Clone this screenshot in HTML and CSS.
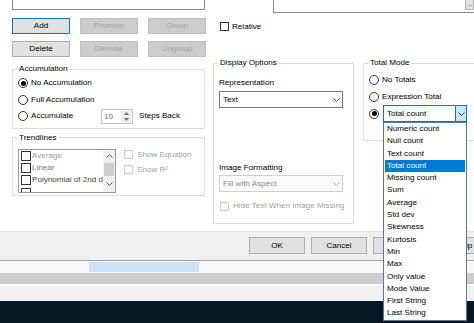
FILE: index.html
```html
<!DOCTYPE html>
<html lang="en">
<head>
    <meta charset="UTF-8">
    <meta name="viewport" content="width=device-width, initial-scale=1.0">
    <title>Expression Properties</title>
    <link rel="stylesheet" href="styles.css">
</head>
<body>
    <div class="page">
        <div class="left">
            <div class="textbox tb-left"></div>
            <div class="btnrow">
                <button class="btn focus">Add</button>
                <button class="btn" disabled>Promote</button>
                <button class="btn" disabled>Group</button>
            </div>
            <div class="btnrow">
                <button class="btn">Delete</button>
                <button class="btn" disabled>Demote</button>
                <button class="btn" disabled>Ungroup</button>
            </div>
            <fieldset class="group accum">
                <legend>Accumulation</legend>
                <div class="opts">
                    <div class="opt"><span class="radio on"></span>No Accumulation</div>
                    <div class="opt"><span class="radio"></span>Full Accumulation</div>
                    <div class="opt">
                        <span class="radio"></span><span class="opt-label">Accumulate</span>
                        <div class="spin">
                            <span class="spin-val">10</span>
                            <span class="spin-btns">
                                <span><svg width="5" height="3" viewBox="0 0 5 3"><path d="M0 3 L2.5 0 L5 3z" fill="#707070"/></svg></span>
                                <span><svg width="5" height="3" viewBox="0 0 5 3"><path d="M0 0 L2.5 3 L5 0z" fill="#707070"/></svg></span>
                            </span>
                        </div>
                        <span>Steps Back</span>
                    </div>
                </div>
            </fieldset>
            <fieldset class="group trend">
                <legend>Trendlines</legend>
                <div class="trend-body">
                    <div class="listbox">
                        <div class="list-items">
                            <div class="li light"><span class="check"></span>Average</div>
                            <div class="li mid"><span class="check"></span>Linear</div>
                            <div class="li"><span class="check"></span>Polynomial of 2nd d</div>
                            <div class="li"><span class="check"></span></div>
                        </div>
                        <div class="vscroll">
                            <span class="sb-arrow"><svg width="7" height="4" viewBox="0 0 7 4"><path d="M0.5 3.5 L3.5 0.5 L6.5 3.5" fill="none" stroke="#555"/></svg></span>
                            <span class="sb-thumb"></span>
                            <span class="sb-arrow"><svg width="7" height="4" viewBox="0 0 7 4"><path d="M0.5 0.5 L3.5 3.5 L6.5 0.5" fill="none" stroke="#555"/></svg></span>
                        </div>
                    </div>
                    <div class="trend-checks">
                        <div class="chk off"><span class="check"></span>Show Equation</div>
                        <div class="chk off"><span class="check"></span>Show R²</div>
                    </div>
                </div>
            </fieldset>
        </div>

        <div class="right">
            <div class="textbox tb-right"><span class="dots">...</span></div>
            <div class="chk relative"><span class="check"></span>Relative</div>
            <div class="groups">
                <fieldset class="group display">
                    <legend>Display Options</legend>
                    <div class="lbl first">Representation</div>
                    <div class="combo">
                        <span class="val">Text</span>
                        <span class="arrow"><svg width="7" height="4" viewBox="0 0 7 4"><path d="M0.5 0.5 L3.5 3.5 L6.5 0.5" fill="none" stroke="#444"/></svg></span>
                    </div>
                    <div class="lbl second">Image Formatting</div>
                    <div class="combo off">
                        <span class="val">Fill with Aspect</span>
                        <span class="arrow"><svg width="7" height="4" viewBox="0 0 7 4"><path d="M0.5 0.5 L3.5 3.5 L6.5 0.5" fill="none" stroke="#b0b0b0"/></svg></span>
                    </div>
                    <div class="chk off hide"><span class="check"></span>Hide Text When Image Missing</div>
                </fieldset>
                <fieldset class="group total">
                    <legend>Total Mode</legend>
                    <div class="opts">
                        <div class="opt"><span class="radio"></span>No Totals</div>
                        <div class="opt"><span class="radio"></span>Expression Total</div>
                        <div class="opt">
                            <span class="radio on"></span>
                            <div class="combo open">
                                <span class="val">Total count</span>
                                <span class="arrow"><svg width="7" height="4" viewBox="0 0 7 4"><path d="M0.5 0.5 L3.5 3.5 L6.5 0.5" fill="none" stroke="#333"/></svg></span>
                                <div class="droplist">
                                    <div class="item">Numeric count</div>
                                    <div class="item">Null count</div>
                                    <div class="item">Text count</div>
                                    <div class="item sel">Total count</div>
                                    <div class="item">Missing count</div>
                                    <div class="item">Sum</div>
                                    <div class="item">Average</div>
                                    <div class="item">Std dev</div>
                                    <div class="item">Skewness</div>
                                    <div class="item">Kurtosis</div>
                                    <div class="item">Min</div>
                                    <div class="item">Max</div>
                                    <div class="item">Only value</div>
                                    <div class="item">Mode Value</div>
                                    <div class="item">First String</div>
                                    <div class="item">Last String</div>
                                </div>
                            </div>
                        </div>
                    </div>
                </fieldset>
            </div>
        </div>
    </div>

    <div class="actions">
        <button class="btn wide">OK</button>
        <button class="btn wide">Cancel</button>
        <button class="btn wide"></button>
        <button class="btn wide help">Help</button>
    </div>
    <div class="tray1"><span class="tray-sel"></span></div>
    <div class="tray2"></div>
    <div class="tray3"></div>
    <div class="taskbar"></div>
</body>
</html>
```

FILE: styles.css
```css
*{
    box-sizing: border-box;
}

body{
    margin: 0;
    width: 474px;
    height: 323px;
    overflow: hidden;
    background-color: #f0f0f0;
    font-family: "Liberation Sans", Arial, sans-serif;
    font-size: 8.1px;
    line-height: 10px;
    color: #000;
}

.page{
    display: flex;
    height: 232px;
    padding-left: 12px;
    background-color: #fff;
    border-bottom: 1px solid #e4e4e4;
}

.left{
    width: 193px;
    flex-shrink: 0;
}

.right{
    flex: 1;
    margin-left: 8px;
}

/* text boxes cut off by the top edge */
.textbox{
    background-color: #fff;
    border: 1px solid #8c8c8c;
    border-top: none;
}

.tb-left{
    height: 10px;
}

.tb-right{
    width: 202px;
    height: 13px;
    margin-left: 60px;
    display: flex;
    justify-content: flex-end;
}

.dots{
    width: 9px;
    height: 10px;
    background-color: #e1e1e1;
    border: 1px solid #b5b5b5;
    border-top: none;
    font-size: 6px;
    line-height: 8px;
    text-align: center;
    color: #444;
}

/* buttons */
.btnrow{
    display: flex;
    gap: 10px;
    margin-top: 8px;
}

.btnrow + .btnrow{
    margin-top: 7px;
}

.btn{
    flex-shrink: 0;
    width: 58px;
    height: 16px;
    padding: 0;
    font: inherit;
    color: #000;
    background-color: #e1e1e1;
    border: 1px solid #adadad;
    border-radius: 0;
}

.btn.focus{
    border-color: #0078d7;
}

.btn:disabled{
    background-color: #cccccc;
    border-color: #bfbfbf;
    color: #a3a3a3;
}

.btn.wide{
    width: 56px;
    height: 17px;
}

.btn.help{
    padding-left: 2px;
}

/* group boxes */
.group{
    margin: 0;
    padding: 0 5px;
    border: 1px solid #dcdcdc;
    min-width: 0;
}

.group legend{
    padding: 0 1px;
    line-height: 10px;
}

.accum{
    margin-top: 7px;
}

.accum .opts{
    padding: 1px 0 3px;
}

.opt{
    display: flex;
    align-items: center;
    height: 16.5px;
    white-space: nowrap;
}

.radio{
    flex-shrink: 0;
    display: flex;
    align-items: center;
    justify-content: center;
    width: 10px;
    height: 10px;
    margin-right: 3px;
    border: 1px solid #333;
    border-radius: 50%;
    background-color: #fff;
}

.radio.on::after{
    content: "";
    width: 5px;
    height: 5px;
    border-radius: 50%;
    background-color: #000;
}

.opt-label{
    width: 70px;
}

.spin{
    display: flex;
    width: 32px;
    height: 15px;
    margin-right: 6px;
    border: 1px solid #c2c2c2;
    background-color: #fff;
}

.spin-val{
    flex: 1;
    padding-left: 2px;
    line-height: 13px;
    color: #707070;
}

.spin-btns{
    display: flex;
    flex-direction: column;
    width: 10px;
    margin: 1px;
}

.spin-btns span{
    flex: 1;
    display: flex;
    align-items: center;
    justify-content: center;
    background-color: #ececec;
}

.spin-btns span + span{
    margin-top: 1px;
}

.trend{
    margin-top: 4px;
}

.trend-body{
    display: flex;
    align-items: flex-start;
    padding: 6px 0 2px;
}

.listbox{
    display: flex;
    width: 98px;
    height: 44px;
    border: 1px solid #9a9a9a;
    background-color: #fff;
    overflow: hidden;
}

.list-items{
    flex: 1;
    min-width: 0;
    padding-left: 2px;
}

.li{
    display: flex;
    align-items: center;
    height: 12.4px;
    white-space: nowrap;
    color: #444;
}

.li.light{
    color: #999;
}

.li.mid{
    color: #777;
}

.check{
    flex-shrink: 0;
    width: 10px;
    height: 10px;
    margin-right: 1px;
    border: 1px solid #333;
    background-color: #fff;
}

.vscroll{
    display: flex;
    flex-direction: column;
    align-items: center;
    width: 12px;
    background-color: #f0f0f0;
}

.sb-arrow{
    display: flex;
    align-items: center;
    justify-content: center;
    height: 12px;
}

.sb-thumb{
    width: 10px;
    height: 13px;
    margin: 1px 0 2px;
    background-color: #cdcdcd;
}

.trend-checks{
    margin-left: 8px;
}

.chk{
    display: flex;
    align-items: center;
    height: 12px;
    white-space: nowrap;
}

.chk .check{
    width: 9px;
    height: 9px;
    margin-right: 4px;
}

.trend-checks .chk + .chk{
    margin-top: 3px;
}

.chk.off{
    color: #a0a0a0;
}

.chk.off .check{
    border-color: #c8c8c8;
}

.relative{
    height: 9px;
    margin-top: 9px;
    margin-left: 7px;
}

.relative .check{
    margin-right: 3px;
}

/* right side group boxes */
.groups{
    display: flex;
    align-items: flex-start;
    gap: 9px;
    margin-top: 27px;
}

.display{
    flex-shrink: 0;
    width: 141px;
    padding-bottom: 12px;
}

.lbl.first{
    margin-top: 10px;
}

.lbl.second{
    margin-top: 55px;
}

.combo{
    position: relative;
    display: flex;
    align-items: center;
    width: 124px;
    height: 17px;
    margin-top: 3px;
    padding-left: 3px;
    border: 1px solid #7a7a7a;
    background-color: #fff;
    white-space: nowrap;
}

.combo .val{
    flex: 1;
}

.combo .arrow{
    display: flex;
    align-items: center;
    justify-content: center;
    width: 12px;
    height: 100%;
}

.combo.off{
    margin-top: 2px;
    border-color: #cfcfcf;
    background-color: #f9f9f9;
    color: #8e8e8e;
}

.display .hide{
    height: 10px;
    margin-top: 9px;
    margin-left: 1px;
}

.total{
    flex-shrink: 0;
    width: 115px;
}

.total .opts{
    padding: 3px 0 18px;
}

.total .opt{
    height: 17px;
}

.combo.open{
    width: 84px;
    margin: 0 0 0 1px;
    border-color: #0078d7;
}

.combo.open .arrow{
    width: 11px;
    background-color: #cce4f7;
    border-left: 1px solid #0078d7;
}

/* open list of the Total Mode combo, drawn over the dialog */
.droplist{
    position: absolute;
    top: calc(100% + 1px);
    left: -1px;
    width: 84px;
    padding: 0 1px;
    border: 1px solid #5a7896;
    background-color: #fff;
}

.item{
    height: 12.3px;
    line-height: 12.3px;
    padding-left: 2px;
}

.item.sel{
    background-color: #0078d7;
    color: #fff;
}

/* dialog bottom */
.actions{
    display: flex;
    gap: 6px;
    height: 29px;
    padding: 5px 0 0 249px;
    border-bottom: 1px solid #a3a3a3;
}

.tray1{
    height: 12px;
    padding-top: 1px;
    background-color: #f8f8f8;
}

.tray-sel{
    display: block;
    width: 110px;
    height: 10px;
    margin-left: 89px;
    background-color: #cce4f7;
}

.tray2{
    height: 11px;
    background-color: #cdcdcd;
}

.tray3{
    height: 17px;
    background-color: #f1f1f1;
    border-top: 2px solid #f8f8f8;
}

.taskbar{
    height: 22px;
    background-color: #081823;
}
```
